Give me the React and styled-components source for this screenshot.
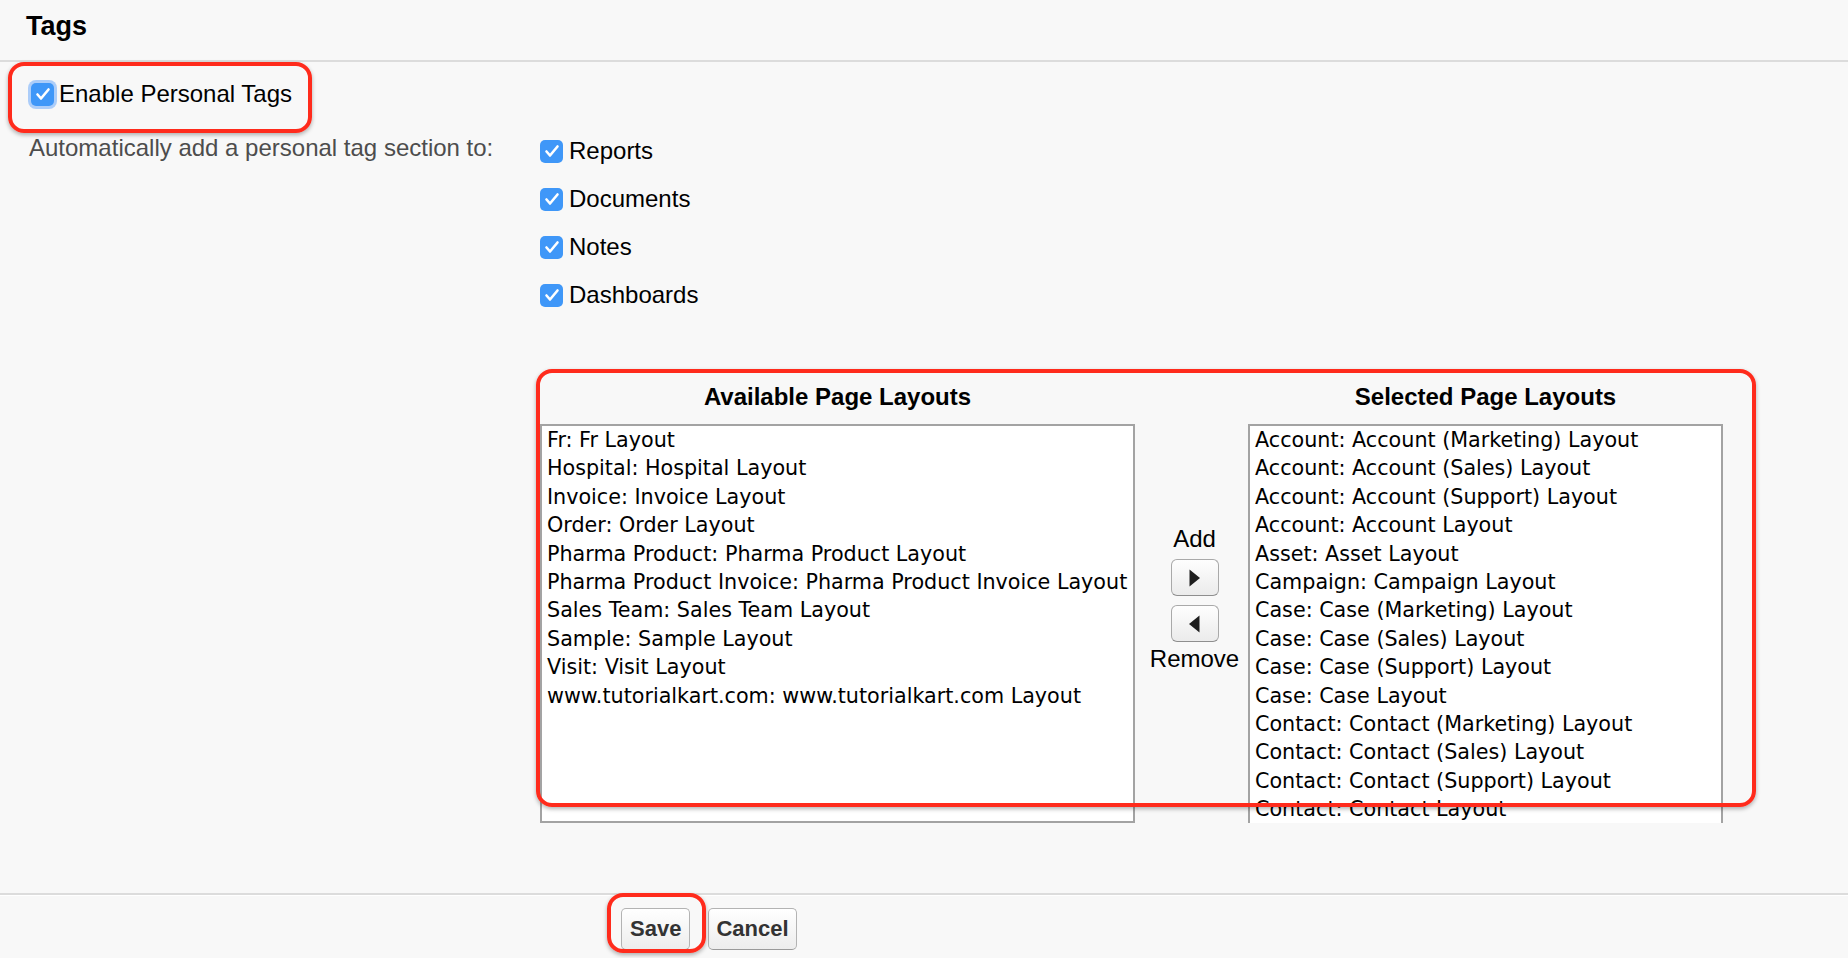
import React from "react";
import styled, { createGlobalStyle } from "styled-components";

const GlobalStyle = createGlobalStyle`
  html, body {
    margin: 0;
    padding: 0;
    background: #f8f8f8;
    font-family: "Liberation Sans", Arial, sans-serif;
    color: #000;
  }
`;

const Page = styled.div`
  width: 1848px;
  height: 958px;
  background: #f8f8f8;
  overflow: hidden;
  display: flex;
  flex-direction: column;
`;

const Header = styled.div`
  height: 49px;
  padding: 11px 0 0 26px;
  border-bottom: 2px solid #dcdcdc;
`;

const Title = styled.h2`
  margin: 0;
  font-size: 27px;
  line-height: 30px;
  font-weight: 700;
`;

const Body = styled.div`
  padding: 18px 0 0 29px;
  display: flex;
  flex-direction: column;
  align-items: flex-start;
`;

const Highlighted = styled.div`
  position: relative;
  display: ${({ $inline }) => ($inline ? "inline-flex" : "block")};
`;

const Highlight = styled.span`
  position: absolute;
  top: ${({ $t }) => $t}px;
  left: ${({ $l }) => $l}px;
  right: ${({ $r }) => $r}px;
  bottom: ${({ $b }) => $b}px;
  border: 4px solid #ff2b1c;
  border-radius: 16px;
  box-shadow: 0 2px 4px rgba(0, 0, 0, 0.3);
  pointer-events: none;
  z-index: 2;
`;

const CheckRow = styled.label`
  display: flex;
  align-items: center;
  gap: ${({ $gap }) => $gap || 6}px;
  font-size: 24px;
  line-height: 28px;
  height: ${({ $h }) => $h || 28}px;
  color: #000;
`;

const Box = styled.span`
  width: 23px;
  height: 23px;
  border-radius: 5px;
  background: #3f97f8;
  display: inline-flex;
  align-items: center;
  justify-content: center;
  margin-left: ${({ $focus }) => ($focus ? 2 : 0)}px;
  box-shadow: ${({ $focus }) =>
    $focus ? "0 0 0 3px rgba(110, 170, 250, 0.55)" : "none"};
`;

const Options = styled.div`
  display: grid;
  grid-template-columns: 511px auto;
  margin-top: 19px;
`;

const OptionLabel = styled.div`
  padding-top: 7px;
  font-size: 24px;
  line-height: 28px;
  color: #4d4d4d;
`;

const OptionList = styled.div`
  display: flex;
  flex-direction: column;
`;

const Dueling = styled.div`
  grid-column: 2;
  margin-top: 64px;
  display: grid;
  grid-template-columns: 595px 113px 475px;
`;

const ListCol = styled.div`
  display: flex;
  flex-direction: column;
`;

const ListTitle = styled.div`
  font-size: 24px;
  line-height: 28px;
  font-weight: 700;
  text-align: center;
  margin-bottom: 13px;
`;

const ListBox = styled.div`
  height: 399px;
  box-sizing: border-box;
  background: #fff;
  border: 2px solid #a3a3a3;
  border-bottom: ${({ $open }) => ($open ? "none" : "2px solid #a3a3a3")};
  padding: 0 5px;
  overflow: hidden;
  font-family: "DejaVu Sans", "Liberation Sans", sans-serif;
  font-size: 20.7px;
  line-height: 28.4px;
  color: #000;
`;

const ListItem = styled.div`
  white-space: nowrap;
`;

const Mover = styled.div`
  display: flex;
  flex-direction: column;
  align-items: center;
  justify-content: center;
  padding: 0 0 8px 6px;
  font-size: 24px;
  line-height: 28px;
`;

const ArrowButton = styled.button`
  width: 48px;
  height: 37px;
  margin: ${({ $m }) => $m};
  padding: 0;
  border: 1.5px solid #a9a9a9;
  border-bottom-color: #8e8e8e;
  border-radius: 6px;
  background: linear-gradient(#fefefe, #ebebeb);
  display: flex;
  align-items: center;
  justify-content: center;
`;

const Footer = styled.div`
  margin-top: auto;
  height: 65px;
  box-sizing: border-box;
  border-top: 2px solid #dcdcdc;
  box-shadow: inset 0 1px 0 #ffffff;
  padding: 13px 0 0 621px;
  display: flex;
  align-items: flex-start;
  gap: 18px;
`;

const Button = styled.button`
  height: 42px;
  padding: 0 ${({ $px }) => $px}px;
  border: 1.5px solid #b3b3b3;
  border-bottom-color: #9a9a9a;
  border-radius: 5px;
  background: linear-gradient(#ffffff, #ededed);
  font-family: "Liberation Sans", Arial, sans-serif;
  font-size: 22px;
  font-weight: 700;
  color: #333;
`;

const Check = ({ focus }) => (
  <Box $focus={focus}>
    <svg width="16" height="14" viewBox="0 0 16 14">
      <polyline
        points="2.5,7.5 6,11.5 13.5,2.5"
        fill="none"
        stroke="#fff"
        strokeWidth="2.6"
        strokeLinecap="round"
        strokeLinejoin="round"
      />
    </svg>
  </Box>
);

const available = [
  "Fr: Fr Layout",
  "Hospital: Hospital Layout",
  "Invoice: Invoice Layout",
  "Order: Order Layout",
  "Pharma Product: Pharma Product Layout",
  "Pharma Product Invoice: Pharma Product Invoice Layout",
  "Sales Team: Sales Team Layout",
  "Sample: Sample Layout",
  "Visit: Visit Layout",
  "www.tutorialkart.com: www.tutorialkart.com Layout",
];

const selected = [
  "Account: Account (Marketing) Layout",
  "Account: Account (Sales) Layout",
  "Account: Account (Support) Layout",
  "Account: Account Layout",
  "Asset: Asset Layout",
  "Campaign: Campaign Layout",
  "Case: Case (Marketing) Layout",
  "Case: Case (Sales) Layout",
  "Case: Case (Support) Layout",
  "Case: Case Layout",
  "Contact: Contact (Marketing) Layout",
  "Contact: Contact (Sales) Layout",
  "Contact: Contact (Support) Layout",
  "Contact: Contact Layout",
];

const tagTargets = ["Reports", "Documents", "Notes", "Dashboards"];

export default function App() {
  return (
    <Page>
      <GlobalStyle />
      <Header>
        <Title>Tags</Title>
      </Header>

      <Body>
        <Highlighted $inline>
          <CheckRow $gap={5}>
            <Check focus />
            Enable Personal Tags
          </CheckRow>
          <Highlight $t={-18} $l={-21} $r={-20} $b={-25} />
        </Highlighted>

        <Options>
          <OptionLabel>Automatically add a personal tag section to:</OptionLabel>
          <OptionList>
            {tagTargets.map((t) => (
              <CheckRow key={t} $h={48} $gap={6}>
                <Check />
                {t}
              </CheckRow>
            ))}
          </OptionList>

          <Highlighted style={{ gridColumn: 2 }}>
            <Dueling>
              <ListCol>
                <ListTitle>Available Page Layouts</ListTitle>
                <ListBox>
                  {available.map((a) => (
                    <ListItem key={a}>{a}</ListItem>
                  ))}
                </ListBox>
              </ListCol>

              <Mover>
                <span>Add</span>
                <ArrowButton $m="6px 0 0">
                  <svg width="13" height="18" viewBox="0 0 13 18">
                    <path d="M1.5 0.5 L12 9 L1.5 17.5 Z" fill="#1e1e1e" />
                  </svg>
                </ArrowButton>
                <ArrowButton $m="9px 0 3px">
                  <svg width="13" height="18" viewBox="0 0 13 18">
                    <path d="M11.5 0.5 L1 9 L11.5 17.5 Z" fill="#1e1e1e" />
                  </svg>
                </ArrowButton>
                <span>Remove</span>
              </Mover>

              <ListCol>
                <ListTitle>Selected Page Layouts</ListTitle>
                <ListBox $open>
                  {selected.map((s) => (
                    <ListItem key={s}>{s}</ListItem>
                  ))}
                </ListBox>
              </ListCol>
            </Dueling>
            <Highlight $t={50} $l={-4} $r={-33} $b={16} />
          </Highlighted>
        </Options>
      </Body>

      <Footer>
        <Highlighted $inline>
          <Button $px={8}>Save</Button>
          <Highlight $t={-15} $l={-14} $r={-16} $b={-3} />
        </Highlighted>
        <Button $px={7}>Cancel</Button>
      </Footer>
    </Page>
  );
}
